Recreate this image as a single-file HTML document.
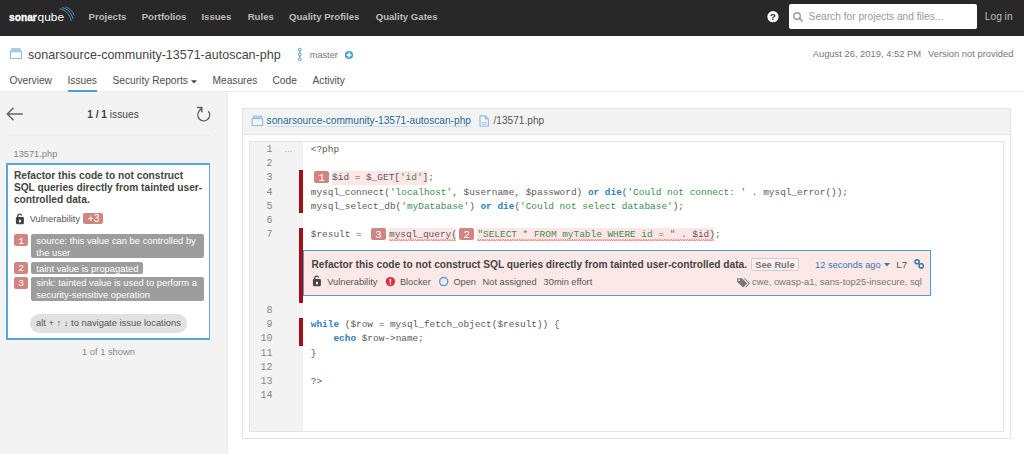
<!DOCTYPE html>
<html><head><meta charset="utf-8"><title>SonarQube</title>
<style>html,body{margin:0;padding:0;width:1024px;height:454px;overflow:hidden;background:#fff;position:relative;font-family:'Liberation Sans', sans-serif}</style>
</head><body>
<div style="position:absolute;left:0px;top:0px;width:1024px;height:35.5px;background:#282828;"></div>
<svg style="position:absolute;left:0;top:0" width="80" height="35" viewBox="0 0 80 35"><text x="9" y="20.7" font-family="Liberation Sans" font-weight="700" font-size="11.2" fill="#fff" stroke="#fff" stroke-width="0.35" textLength="27.8" lengthAdjust="spacingAndGlyphs">sonar</text><text x="37.6" y="20.7" font-family="Liberation Sans" font-weight="400" font-size="11.2" fill="#fff" textLength="26.4" lengthAdjust="spacingAndGlyphs">qube</text><g fill="none" stroke="#4b9fd5" stroke-width="0.9"><path d="M59.5 8.8 C65 9.5 70 14 71.2 21"/><path d="M62 7.5 C67.5 8.8 72 13 73 19"/><path d="M65.5 7 C70 8.5 73.5 12 74.2 15.5"/></g></svg>
<div style="position:absolute;left:88.6px;top:17.1px;font-family:'Liberation Sans', sans-serif;font-size:9.6px;line-height:0;font-weight:700;color:#bcbcbc;white-space:pre;">Projects</div>
<div style="position:absolute;left:141.7px;top:17.1px;font-family:'Liberation Sans', sans-serif;font-size:9.6px;line-height:0;font-weight:700;color:#bcbcbc;white-space:pre;">Portfolios</div>
<div style="position:absolute;left:201.4px;top:17.1px;font-family:'Liberation Sans', sans-serif;font-size:9.6px;line-height:0;font-weight:700;color:#bcbcbc;white-space:pre;">Issues</div>
<div style="position:absolute;left:247.7px;top:17.1px;font-family:'Liberation Sans', sans-serif;font-size:9.6px;line-height:0;font-weight:700;color:#bcbcbc;white-space:pre;">Rules</div>
<div style="position:absolute;left:289px;top:17.1px;font-family:'Liberation Sans', sans-serif;font-size:9.6px;line-height:0;font-weight:700;color:#bcbcbc;white-space:pre;">Quality Profiles</div>
<div style="position:absolute;left:375.7px;top:17.1px;font-family:'Liberation Sans', sans-serif;font-size:9.6px;line-height:0;font-weight:700;color:#bcbcbc;white-space:pre;">Quality Gates</div>
<svg style="position:absolute;left:766px;top:10px" width="14" height="14" viewBox="0 0 14 14"><circle cx="7" cy="6.7" r="5.6" fill="#fff"/><text x="7" y="9.9" text-anchor="middle" font-family="Liberation Sans" font-weight="700" font-size="9.6" fill="#282828">?</text></svg>
<div style="position:absolute;box-sizing:border-box;left:789px;top:4.1px;width:188px;height:24.9px;background:#fff;border-radius:2px"></div>
<svg style="position:absolute;left:792px;top:11px" width="12" height="12" viewBox="0 0 12 12"><circle cx="5.1" cy="5" r="3.2" fill="none" stroke="#999" stroke-width="1.4"/><path d="M7.5 7.4 L10 9.9" stroke="#999" stroke-width="1.6" stroke-linecap="round"/></svg>
<div style="position:absolute;left:808.6px;top:17.2px;font-family:'Liberation Sans', sans-serif;font-size:10.2px;line-height:0;font-weight:400;color:#999;white-space:pre;">Search for projects and files...</div>
<div style="position:absolute;left:984.8px;top:17.1px;font-family:'Liberation Sans', sans-serif;font-size:10.2px;line-height:0;font-weight:400;color:#bcbcbc;white-space:pre;">Log in</div>
<div style="position:absolute;left:0px;top:35.5px;width:1024px;height:55.5px;background:#fff;"></div>
<div style="position:absolute;left:0px;top:91px;width:1024px;height:1px;background:#ededed;"></div>
<svg style="position:absolute;left:9px;top:47px" width="14" height="14" viewBox="0 0 14 14"><path d="M2.4 1.1 H11.4 L12.4 3.9 H1.5 Z" fill="#a9cdea"/><rect x="1.4" y="4.6" width="11.1" height="6.9" fill="none" stroke="#8fbfe6" stroke-width="1.1"/></svg>
<div style="position:absolute;left:28.1px;top:54.6px;font-family:'Liberation Sans', sans-serif;font-size:12.52px;line-height:0;font-weight:400;color:#444;white-space:pre;">sonarsource-community-13571-autoscan-php</div>
<svg style="position:absolute;left:296px;top:47px" width="8" height="15" viewBox="0 0 8 15"><g fill="none" stroke="#4b9fd5" stroke-width="1"><circle cx="3.8" cy="2.6" r="1.4"/><circle cx="3.8" cy="7.5" r="1.4"/><circle cx="3.8" cy="12.4" r="1.4"/><path d="M3.8 4 V6.1 M3.8 8.9 V11"/></g></svg>
<div style="position:absolute;left:309.8px;top:55.2px;font-family:'Liberation Sans', sans-serif;font-size:9.16px;line-height:0;font-weight:400;color:#777;white-space:pre;">master</div>
<svg style="position:absolute;left:344px;top:50px" width="10" height="10" viewBox="0 0 10 10"><circle cx="5" cy="5" r="4.1" fill="#4b9fd5"/><path d="M5 2.5 V7.5 M2.5 5 H7.5" stroke="#fff" stroke-width="1.5"/></svg>
<div style="position:absolute;left:812.7px;top:54.1px;font-family:'Liberation Sans', sans-serif;font-size:9.38px;line-height:0;font-weight:400;color:#777;white-space:pre;">August 26, 2019, 4:52 PM</div>
<div style="position:absolute;left:928px;top:54.1px;font-family:'Liberation Sans', sans-serif;font-size:9.38px;line-height:0;font-weight:400;color:#777;white-space:pre;">Version not provided</div>
<div style="position:absolute;left:9.5px;top:81.2px;font-family:'Liberation Sans', sans-serif;font-size:10.2px;line-height:0;font-weight:400;color:#4e4e4e;white-space:pre;">Overview</div>
<div style="position:absolute;left:67.5px;top:81.2px;font-family:'Liberation Sans', sans-serif;font-size:10.2px;line-height:0;font-weight:400;color:#4e4e4e;white-space:pre;">Issues</div>
<div style="position:absolute;left:112.5px;top:81.2px;font-family:'Liberation Sans', sans-serif;font-size:10.2px;line-height:0;font-weight:400;color:#4e4e4e;white-space:pre;">Security Reports</div>
<div style="position:absolute;left:212.5px;top:81.2px;font-family:'Liberation Sans', sans-serif;font-size:10.2px;line-height:0;font-weight:400;color:#4e4e4e;white-space:pre;">Measures</div>
<div style="position:absolute;left:272.5px;top:81.2px;font-family:'Liberation Sans', sans-serif;font-size:10.2px;line-height:0;font-weight:400;color:#4e4e4e;white-space:pre;">Code</div>
<div style="position:absolute;left:312.5px;top:81.2px;font-family:'Liberation Sans', sans-serif;font-size:10.2px;line-height:0;font-weight:400;color:#4e4e4e;white-space:pre;">Activity</div>
<svg style="position:absolute;left:190px;top:78.5px" width="8" height="6" viewBox="0 0 8 6"><path d="M1 1.2 H7 L4 4.6 Z" fill="#444"/></svg>
<div style="position:absolute;left:68px;top:90px;width:29px;height:2px;background:#4b9fd5;"></div>
<div style="position:absolute;left:0px;top:91.6px;width:226.6px;height:362.4px;background:#f3f3f3;"></div>
<div style="position:absolute;left:226.6px;top:91.6px;width:1.2px;height:362.4px;background:#e9e9e9;"></div>
<svg style="position:absolute;left:5px;top:106px" width="20" height="16" viewBox="0 0 20 16"><path d="M2.5 8 H17.8 M8.5 1.8 L2.3 8 L8.5 14.2" fill="none" stroke="#666" stroke-width="1.5"/></svg>
<div style="position:absolute;left:87.2px;top:115.3px;font-family:'Liberation Sans', sans-serif;font-size:10.2px;line-height:0;color:#444;white-space:pre"><b>1 / 1</b> issues</div>
<svg style="position:absolute;left:190px;top:100px" width="28" height="28" viewBox="0 0 28 28"><path d="M18.3 11.2 A5.9 5.9 0 1 1 9 11.4 L11.6 7.8" fill="none" stroke="#666" stroke-width="1.5"/><path d="M7 7.5 H11.8 V12.2" fill="none" stroke="#666" stroke-width="1.6"/></svg>
<div style="position:absolute;left:6.7px;top:134.8px;width:203.3px;height:1.7px;background:#e9e9e9;"></div>
<div style="position:absolute;left:13.5px;top:154.1px;font-family:'Liberation Sans', sans-serif;font-size:9.27px;line-height:0;font-weight:400;color:#858585;white-space:pre;">13571.php</div>
<div style="position:absolute;box-sizing:border-box;left:6px;top:163px;width:204.4px;height:177px;background:#fff;border:2px solid #5aa6da;border-right-width:1.6px"></div>
<div style="position:absolute;left:13.9px;top:176px;font-family:'Liberation Sans', sans-serif;font-size:10.2px;line-height:0;font-weight:700;color:#444;white-space:pre;">Refactor this code to not construct</div>
<div style="position:absolute;left:13.9px;top:187.9px;font-family:'Liberation Sans', sans-serif;font-size:10.2px;line-height:0;font-weight:700;color:#444;white-space:pre;">SQL queries directly from tainted user-</div>
<div style="position:absolute;left:13.9px;top:199.9px;font-family:'Liberation Sans', sans-serif;font-size:10.2px;line-height:0;font-weight:700;color:#444;white-space:pre;">controlled data.</div>
<svg style="position:absolute;left:15px;top:212.5px" width="10" height="12" viewBox="0 0 10 12"><path d="M2.75 4.6 V3.1 A1.95 1.95 0 0 1 6.6 2.6" fill="none" stroke="#444" stroke-width="1.3"/><rect x="0.9" y="4.1" width="8" height="7.1" rx="1.1" fill="#444"/><ellipse cx="4.9" cy="8" rx="1.1" ry="1.5" fill="#fff"/></svg>
<div style="position:absolute;left:29.75px;top:218.7px;font-family:'Liberation Sans', sans-serif;font-size:9.3px;line-height:0;font-weight:400;color:#555;white-space:pre;">Vulnerability</div>
<div style="position:absolute;box-sizing:border-box;left:83.2px;top:212.7px;width:19.8px;height:11.7px;background:#d18582;border-radius:2px"></div>
<div style="position:absolute;left:87.8px;top:219.2px;font-family:'Liberation Sans', sans-serif;font-size:10.1px;line-height:0;font-weight:400;color:#fff;white-space:pre;">+3</div>
<div style="position:absolute;box-sizing:border-box;left:13.7px;top:234.4px;width:14.7px;height:11.6px;background:#d18582;border-radius:2px"></div>
<div style="position:absolute;left:13.7px;width:14.7px;text-align:center;top:241.5px;font-family:'Liberation Mono', monospace;font-size:9.6px;line-height:0;color:#fff">1</div>
<div style="position:absolute;box-sizing:border-box;left:31.4px;top:234.2px;width:172.3px;height:23.6px;background:#9d9d9d;border-radius:2px"></div>
<div style="position:absolute;left:36.35px;top:240.6px;font-family:'Liberation Sans', sans-serif;font-size:9.38px;line-height:0;font-weight:400;color:#fff;white-space:pre;">source: this value can be controlled by</div>
<div style="position:absolute;left:36.35px;top:252.6px;font-family:'Liberation Sans', sans-serif;font-size:9.38px;line-height:0;font-weight:400;color:#fff;white-space:pre;">the user</div>
<div style="position:absolute;box-sizing:border-box;left:13.7px;top:262.2px;width:14.7px;height:11.6px;background:#d18582;border-radius:2px"></div>
<div style="position:absolute;left:13.7px;width:14.7px;text-align:center;top:269.3px;font-family:'Liberation Mono', monospace;font-size:9.6px;line-height:0;color:#fff">2</div>
<div style="position:absolute;box-sizing:border-box;left:31.4px;top:262.3px;width:111.6px;height:11.7px;background:#9d9d9d;border-radius:2px"></div>
<div style="position:absolute;left:36.35px;top:268.6px;font-family:'Liberation Sans', sans-serif;font-size:9.38px;line-height:0;font-weight:400;color:#fff;white-space:pre;">taint value is propagated</div>
<div style="position:absolute;box-sizing:border-box;left:13.7px;top:277px;width:14.7px;height:11.6px;background:#d18582;border-radius:2px"></div>
<div style="position:absolute;left:13.7px;width:14.7px;text-align:center;top:284.1px;font-family:'Liberation Mono', monospace;font-size:9.6px;line-height:0;color:#fff">3</div>
<div style="position:absolute;box-sizing:border-box;left:31.4px;top:277px;width:172.3px;height:24px;background:#9d9d9d;border-radius:2px"></div>
<div style="position:absolute;left:36.35px;top:283.4px;font-family:'Liberation Sans', sans-serif;font-size:9.38px;line-height:0;font-weight:400;color:#fff;white-space:pre;">sink: tainted value is used to perform a</div>
<div style="position:absolute;left:36.35px;top:295.4px;font-family:'Liberation Sans', sans-serif;font-size:9.38px;line-height:0;font-weight:400;color:#fff;white-space:pre;">security-sensitive operation</div>
<div style="position:absolute;box-sizing:border-box;left:30px;top:314px;width:157.1px;height:18.8px;background:#e1e1e1;border-radius:9.4px"></div>
<div style="position:absolute;left:36px;top:322.7px;font-family:'Liberation Sans', sans-serif;font-size:9.37px;line-height:0;font-weight:400;color:#555;white-space:pre;">alt + ↑ ↓ to navigate issue locations</div>
<div style="position:absolute;left:82.1px;top:352px;font-family:'Liberation Sans', sans-serif;font-size:9.3px;line-height:0;font-weight:400;color:#888;white-space:pre;">1 of 1 shown</div>
<div style="position:absolute;box-sizing:border-box;left:242px;top:108px;width:769px;height:331px;border:1px solid #e3e3e3"></div>
<div style="position:absolute;left:243px;top:109px;width:767px;height:25px;background:#f3f3f3;"></div>
<div style="position:absolute;left:243px;top:134px;width:767px;height:1px;background:#e3e3e3;"></div>
<svg style="position:absolute;left:251px;top:114px" width="13" height="13" viewBox="0 0 13 13"><path d="M2 1.4 H10.8 L11.6 4 H1.2 Z" fill="#a9cdea"/><rect x="1.2" y="4.6" width="10.4" height="7" fill="none" stroke="#8fbfe6" stroke-width="1.1"/></svg>
<div style="position:absolute;left:266.6px;top:121.4px;font-family:'Liberation Sans', sans-serif;font-size:10.15px;line-height:0;font-weight:400;color:#236a97;white-space:pre;">sonarsource-community-13571-autoscan-php</div>
<div style="position:absolute;left:266.6px;top:126.2px;width:204.4px;height:0.8px;background:#c8dcea;"></div>
<svg style="position:absolute;left:478px;top:114px" width="12" height="14" viewBox="0 0 12 14"><path d="M2 1.9 H7.4 L10.4 4.9 V12.2 H2 Z M7.4 1.9 V4.9 H10.4" fill="none" stroke="#8fbfe6" stroke-width="1.1"/><path d="M3.6 8.6 H8.8 M3.6 10.3 H8.8" stroke="#9cc6e8" stroke-width="0.9"/></svg>
<div style="position:absolute;left:493.5px;top:121.4px;font-family:'Liberation Sans', sans-serif;font-size:10.15px;line-height:0;font-weight:400;color:#555;white-space:pre;">/13571.php</div>
<div style="position:absolute;box-sizing:border-box;left:249px;top:141px;width:755px;height:291px;border:1px solid #e3e3e3"></div>
<div style="position:absolute;left:250px;top:142px;width:53px;height:289px;background:#f3f3f3;"></div>
<div style="position:absolute;left:266.5px;top:150.1px;font-family:'Liberation Mono', monospace;font-size:10.0px;line-height:0;font-weight:400;color:#888;white-space:pre;">1</div>
<div style="position:absolute;left:266.5px;top:164.25px;font-family:'Liberation Mono', monospace;font-size:10.0px;line-height:0;font-weight:400;color:#888;white-space:pre;">2</div>
<div style="position:absolute;left:266.5px;top:178.4px;font-family:'Liberation Mono', monospace;font-size:10.0px;line-height:0;font-weight:400;color:#888;white-space:pre;">3</div>
<div style="position:absolute;left:266.5px;top:192.55px;font-family:'Liberation Mono', monospace;font-size:10.0px;line-height:0;font-weight:400;color:#888;white-space:pre;">4</div>
<div style="position:absolute;left:266.5px;top:206.7px;font-family:'Liberation Mono', monospace;font-size:10.0px;line-height:0;font-weight:400;color:#888;white-space:pre;">5</div>
<div style="position:absolute;left:266.5px;top:220.85px;font-family:'Liberation Mono', monospace;font-size:10.0px;line-height:0;font-weight:400;color:#888;white-space:pre;">6</div>
<div style="position:absolute;left:266.5px;top:235.0px;font-family:'Liberation Mono', monospace;font-size:10.0px;line-height:0;font-weight:400;color:#888;white-space:pre;">7</div>
<div style="position:absolute;left:266.5px;top:311px;font-family:'Liberation Mono', monospace;font-size:10.0px;line-height:0;font-weight:400;color:#888;white-space:pre;">8</div>
<div style="position:absolute;left:266.5px;top:325px;font-family:'Liberation Mono', monospace;font-size:10.0px;line-height:0;font-weight:400;color:#888;white-space:pre;">9</div>
<div style="position:absolute;left:260.5px;top:339px;font-family:'Liberation Mono', monospace;font-size:10.0px;line-height:0;font-weight:400;color:#888;white-space:pre;">10</div>
<div style="position:absolute;left:260.5px;top:354px;font-family:'Liberation Mono', monospace;font-size:10.0px;line-height:0;font-weight:400;color:#888;white-space:pre;">11</div>
<div style="position:absolute;left:260.5px;top:368px;font-family:'Liberation Mono', monospace;font-size:10.0px;line-height:0;font-weight:400;color:#888;white-space:pre;">12</div>
<div style="position:absolute;left:260.5px;top:382px;font-family:'Liberation Mono', monospace;font-size:10.0px;line-height:0;font-weight:400;color:#888;white-space:pre;">13</div>
<div style="position:absolute;left:260.5px;top:396px;font-family:'Liberation Mono', monospace;font-size:10.0px;line-height:0;font-weight:400;color:#888;white-space:pre;">14</div>
<div style="position:absolute;left:284.3px;top:150.1px;font-family:'Liberation Sans', sans-serif;font-size:8px;line-height:0;font-weight:400;color:#777;white-space:pre;">…</div>
<div style="position:absolute;left:299px;top:170.4px;width:4px;height:42.2px;background:#a2101c;"></div>
<div style="position:absolute;left:299px;top:227.7px;width:4px;height:75.2px;background:#a2101c;"></div>
<div style="position:absolute;left:299px;top:317.7px;width:4px;height:28.0px;background:#a2101c;"></div>
<div style="position:absolute;left:310.8px;top:150.1px;font-family:'Liberation Mono', monospace;font-size:9.43px;line-height:0;font-weight:400;color:#5a5a5a;white-space:pre;"><span style="color:#5a5a5a;font-weight:400">&lt;?php</span></div>
<div style="position:absolute;box-sizing:border-box;left:314.3px;top:171.2px;width:14.6px;height:12.0px;background:#d18582;border-radius:2px"></div>
<div style="position:absolute;left:314.3px;width:14.6px;text-align:center;top:178.0px;font-family:'Liberation Mono', monospace;font-size:10.6px;line-height:0;color:#fff">1</div>
<div style="position:absolute;left:331.9px;top:170.5px;width:95.7px;height:14.3px;background:#fde6e6;"></div>
<div style="position:absolute;left:332.1px;top:178.4px;font-family:'Liberation Mono', monospace;font-size:9.43px;line-height:0;font-weight:400;color:#5a5a5a;white-space:pre;"><span style="color:#5a5a5a;font-weight:400">$id = $_GET[</span><span style="color:#3d8b50;font-weight:400">'id'</span><span style="color:#5a5a5a;font-weight:400">];</span></div>
<div style="position:absolute;left:310.8px;top:192.55px;font-family:'Liberation Mono', monospace;font-size:9.43px;line-height:0;font-weight:400;color:#5a5a5a;white-space:pre;"><span style="color:#5a5a5a;font-weight:400">mysql_connect(</span><span style="color:#3d8b50;font-weight:400">'localhost'</span><span style="color:#5a5a5a;font-weight:400">, $username, $password) </span><span style="color:#2f7fc0;font-weight:700">or</span><span style="color:#5a5a5a;font-weight:400"> </span><span style="color:#2f7fc0;font-weight:700">die</span><span style="color:#5a5a5a;font-weight:400">(</span><span style="color:#3d8b50;font-weight:400">'Could not connect: '</span><span style="color:#5a5a5a;font-weight:400"> . mysql_error());</span></div>
<div style="position:absolute;left:310.8px;top:206.7px;font-family:'Liberation Mono', monospace;font-size:9.43px;line-height:0;font-weight:400;color:#5a5a5a;white-space:pre;"><span style="color:#5a5a5a;font-weight:400">mysql_select_db(</span><span style="color:#3d8b50;font-weight:400">'myDatabase'</span><span style="color:#5a5a5a;font-weight:400">) </span><span style="color:#2f7fc0;font-weight:700">or</span><span style="color:#5a5a5a;font-weight:400"> </span><span style="color:#2f7fc0;font-weight:700">die</span><span style="color:#5a5a5a;font-weight:400">(</span><span style="color:#3d8b50;font-weight:400">'Could not select database'</span><span style="color:#5a5a5a;font-weight:400">);</span></div>
<div style="position:absolute;left:310.8px;top:235.0px;font-family:'Liberation Mono', monospace;font-size:9.43px;line-height:0;font-weight:400;color:#5a5a5a;white-space:pre;"><span style="color:#5a5a5a;font-weight:400">$result = </span></div>
<div style="position:absolute;box-sizing:border-box;left:371px;top:228.2px;width:14.8px;height:12.3px;background:#d18582;border-radius:2px"></div>
<div style="position:absolute;left:371px;width:14.8px;text-align:center;top:235.3px;font-family:'Liberation Mono', monospace;font-size:10.6px;line-height:0;color:#fff">3</div>
<div style="position:absolute;left:388.8px;top:227.7px;width:67.1px;height:13.7px;background:#fde6e6;"></div>
<div style="position:absolute;left:389px;top:235.0px;font-family:'Liberation Mono', monospace;font-size:9.43px;line-height:0;font-weight:400;color:#5a5a5a;white-space:pre;"><span style="color:#5a5a5a;font-weight:400">mysql_query(</span></div>
<div style="position:absolute;box-sizing:border-box;left:459.3px;top:228.1px;width:14.6px;height:12.4px;background:#d18582;border-radius:2px"></div>
<div style="position:absolute;left:459.3px;width:14.6px;text-align:center;top:235.3px;font-family:'Liberation Mono', monospace;font-size:10.6px;line-height:0;color:#fff">2</div>
<div style="position:absolute;left:477.2px;top:227.7px;width:237.2px;height:13.7px;background:#fde6e6;"></div>
<div style="position:absolute;left:477.4px;top:235.0px;font-family:'Liberation Mono', monospace;font-size:9.43px;line-height:0;font-weight:400;color:#5a5a5a;white-space:pre;"><span style="color:#3d8b50;font-weight:400">"SELECT * FROM myTable WHERE id = "</span><span style="color:#5a5a5a;font-weight:400"> . $id</span><span style="color:#5a5a5a;font-weight:400">);</span></div>
<svg style="position:absolute;left:388.8px;top:238.9px" width="67.1" height="2.5" viewBox="0 0 67.1 2.5"><polyline points="0.0,1.7 1.15,0.5 2.3,1.7 3.45,0.5 4.6,1.7 5.75,0.5 6.9,1.7 8.05,0.5 9.2,1.7 10.35,0.5 11.5,1.7 12.65,0.5 13.8,1.7 14.95,0.5 16.1,1.7 17.25,0.5 18.4,1.7 19.55,0.5 20.7,1.7 21.85,0.5 23.0,1.7 24.15,0.5 25.3,1.7 26.45,0.5 27.6,1.7 28.75,0.5 29.9,1.7 31.05,0.5 32.2,1.7 33.35,0.5 34.5,1.7 35.65,0.5 36.8,1.7 37.95,0.5 39.1,1.7 40.25,0.5 41.4,1.7 42.55,0.5 43.7,1.7 44.85,0.5 46.0,1.7 47.15,0.5 48.3,1.7 49.45,0.5 50.6,1.7 51.75,0.5 52.9,1.7 54.05,0.5 55.2,1.7 56.35,0.5 57.5,1.7 58.65,0.5 59.8,1.7 60.95,0.5 62.1,1.7 63.25,0.5 64.4,1.7 65.55,0.5 66.7,1.7" fill="none" stroke="#ec5c68" stroke-width="0.9"/></svg>
<svg style="position:absolute;left:477.2px;top:238.9px" width="237.2" height="2.5" viewBox="0 0 237.2 2.5"><polyline points="0.0,1.7 1.15,0.5 2.3,1.7 3.45,0.5 4.6,1.7 5.75,0.5 6.9,1.7 8.05,0.5 9.2,1.7 10.35,0.5 11.5,1.7 12.65,0.5 13.8,1.7 14.95,0.5 16.1,1.7 17.25,0.5 18.4,1.7 19.55,0.5 20.7,1.7 21.85,0.5 23.0,1.7 24.15,0.5 25.3,1.7 26.45,0.5 27.6,1.7 28.75,0.5 29.9,1.7 31.05,0.5 32.2,1.7 33.35,0.5 34.5,1.7 35.65,0.5 36.8,1.7 37.95,0.5 39.1,1.7 40.25,0.5 41.4,1.7 42.55,0.5 43.7,1.7 44.85,0.5 46.0,1.7 47.15,0.5 48.3,1.7 49.45,0.5 50.6,1.7 51.75,0.5 52.9,1.7 54.05,0.5 55.2,1.7 56.35,0.5 57.5,1.7 58.65,0.5 59.8,1.7 60.95,0.5 62.1,1.7 63.25,0.5 64.4,1.7 65.55,0.5 66.7,1.7 67.85,0.5 69.0,1.7 70.15,0.5 71.3,1.7 72.45,0.5 73.6,1.7 74.75,0.5 75.9,1.7 77.05,0.5 78.2,1.7 79.35,0.5 80.5,1.7 81.65,0.5 82.8,1.7 83.95,0.5 85.1,1.7 86.25,0.5 87.4,1.7 88.55,0.5 89.7,1.7 90.85,0.5 92.0,1.7 93.15,0.5 94.3,1.7 95.45,0.5 96.6,1.7 97.75,0.5 98.9,1.7 100.05,0.5 101.2,1.7 102.35,0.5 103.5,1.7 104.65,0.5 105.8,1.7 106.95,0.5 108.1,1.7 109.25,0.5 110.4,1.7 111.55,0.5 112.7,1.7 113.85,0.5 115.0,1.7 116.15,0.5 117.3,1.7 118.45,0.5 119.6,1.7 120.75,0.5 121.9,1.7 123.05,0.5 124.2,1.7 125.35,0.5 126.5,1.7 127.65,0.5 128.8,1.7 129.95,0.5 131.1,1.7 132.25,0.5 133.4,1.7 134.55,0.5 135.7,1.7 136.85,0.5 138.0,1.7 139.15,0.5 140.3,1.7 141.45,0.5 142.6,1.7 143.75,0.5 144.9,1.7 146.05,0.5 147.2,1.7 148.35,0.5 149.5,1.7 150.65,0.5 151.8,1.7 152.95,0.5 154.1,1.7 155.25,0.5 156.4,1.7 157.55,0.5 158.7,1.7 159.85,0.5 161.0,1.7 162.15,0.5 163.3,1.7 164.45,0.5 165.6,1.7 166.75,0.5 167.9,1.7 169.05,0.5 170.2,1.7 171.35,0.5 172.5,1.7 173.65,0.5 174.8,1.7 175.95,0.5 177.1,1.7 178.25,0.5 179.4,1.7 180.55,0.5 181.7,1.7 182.85,0.5 184.0,1.7 185.15,0.5 186.3,1.7 187.45,0.5 188.6,1.7 189.75,0.5 190.9,1.7 192.05,0.5 193.2,1.7 194.35,0.5 195.5,1.7 196.65,0.5 197.8,1.7 198.95,0.5 200.1,1.7 201.25,0.5 202.4,1.7 203.55,0.5 204.7,1.7 205.85,0.5 207.0,1.7 208.15,0.5 209.3,1.7 210.45,0.5 211.6,1.7 212.75,0.5 213.9,1.7 215.05,0.5 216.2,1.7 217.35,0.5 218.5,1.7 219.65,0.5 220.8,1.7 221.95,0.5 223.1,1.7 224.25,0.5 225.4,1.7 226.55,0.5 227.7,1.7 228.85,0.5 230.0,1.7 231.15,0.5 232.3,1.7 233.45,0.5 234.6,1.7 235.75,0.5 236.9,1.7" fill="none" stroke="#ec5c68" stroke-width="0.9"/></svg>
<div style="position:absolute;left:310.8px;top:325px;font-family:'Liberation Mono', monospace;font-size:9.43px;line-height:0;font-weight:400;color:#5a5a5a;white-space:pre;"><span style="color:#2f7fc0;font-weight:700">while</span><span style="color:#5a5a5a;font-weight:400"> ($row = mysql_fetch_object($result)) {</span></div>
<div style="position:absolute;left:310.8px;top:339px;font-family:'Liberation Mono', monospace;font-size:9.43px;line-height:0;font-weight:400;color:#5a5a5a;white-space:pre;"><span style="color:#5a5a5a;font-weight:400">    </span><span style="color:#2f7fc0;font-weight:700">echo</span><span style="color:#5a5a5a;font-weight:400"> $row-&gt;name;</span></div>
<div style="position:absolute;left:310.8px;top:354px;font-family:'Liberation Mono', monospace;font-size:9.43px;line-height:0;font-weight:400;color:#5a5a5a;white-space:pre;"><span style="color:#5a5a5a;font-weight:400">}</span></div>
<div style="position:absolute;left:310.8px;top:382px;font-family:'Liberation Mono', monospace;font-size:9.43px;line-height:0;font-weight:400;color:#5a5a5a;white-space:pre;"><span style="color:#5a5a5a;font-weight:400">?&gt;</span></div>
<div style="position:absolute;box-sizing:border-box;left:303px;top:249.6px;width:627.6px;height:46.4px;background:#fde8e8;border:1.6px solid #4b9fd5"></div>
<div style="position:absolute;left:311.5px;top:264.7px;font-family:'Liberation Sans', sans-serif;font-size:10.18px;line-height:0;font-weight:700;color:#444;white-space:pre;">Refactor this code to not construct SQL queries directly from tainted user-controlled data.</div>
<div style="position:absolute;box-sizing:border-box;left:751px;top:257.5px;width:48px;height:13.2px;border:1px solid #cfcfcf;border-radius:2px;background:#fdf0f0"></div>
<div style="position:absolute;left:755.2px;top:264.6px;font-family:'Liberation Sans', sans-serif;font-size:9.33px;line-height:0;font-weight:700;color:#777;white-space:pre;">See Rule</div>
<div style="position:absolute;left:815.1px;top:265.3px;font-family:'Liberation Sans', sans-serif;font-size:9.29px;line-height:0;font-weight:400;color:#3478ae;white-space:pre;">12 seconds ago</div>
<svg style="position:absolute;left:883px;top:262px" width="8" height="6" viewBox="0 0 8 6"><path d="M1 1 H7 L4 4.4 Z" fill="#3478ae"/></svg>
<div style="position:absolute;left:896.3px;top:265px;font-family:'Liberation Sans', sans-serif;font-size:9.9px;line-height:0;font-weight:400;color:#555;white-space:pre;">L7</div>
<svg style="position:absolute;left:908px;top:254px" width="22" height="20" viewBox="0 0 22 20"><g fill="none" stroke="#2f73a8" stroke-width="1.4"><circle cx="9.1" cy="7.8" r="2.1"/><circle cx="13.2" cy="11.9" r="2.1"/></g></svg>
<svg style="position:absolute;left:311.7px;top:274.7px" width="10" height="12" viewBox="0 0 10 12"><path d="M2.75 4.6 V3.1 A1.95 1.95 0 0 1 6.6 2.6" fill="none" stroke="#444" stroke-width="1.3"/><rect x="0.9" y="4.1" width="8" height="7.1" rx="1.1" fill="#444"/><ellipse cx="4.9" cy="8" rx="1.1" ry="1.5" fill="#fff"/></svg>
<div style="position:absolute;left:327.2px;top:281.8px;font-family:'Liberation Sans', sans-serif;font-size:9.3px;line-height:0;font-weight:400;color:#555;white-space:pre;">Vulnerability</div>
<svg style="position:absolute;left:385px;top:276px" width="11" height="11" viewBox="0 0 11 11"><circle cx="5.4" cy="5.6" r="4.7" fill="#d4333f"/><path d="M5.4 2.8 V6.4" stroke="#fff" stroke-width="1.4"/><circle cx="5.4" cy="8.1" r="0.8" fill="#fff"/></svg>
<div style="position:absolute;left:399.9px;top:281.8px;font-family:'Liberation Sans', sans-serif;font-size:9.25px;line-height:0;font-weight:400;color:#555;white-space:pre;">Blocker</div>
<svg style="position:absolute;left:438px;top:276px" width="11" height="11" viewBox="0 0 11 11"><circle cx="5.7" cy="5.6" r="4.1" fill="none" stroke="#4b9fd5" stroke-width="1.3"/></svg>
<div style="position:absolute;left:453.4px;top:281.8px;font-family:'Liberation Sans', sans-serif;font-size:9.25px;line-height:0;font-weight:400;color:#555;white-space:pre;">Open</div>
<div style="position:absolute;left:482.6px;top:281.8px;font-family:'Liberation Sans', sans-serif;font-size:9.25px;line-height:0;font-weight:400;color:#555;white-space:pre;">Not assigned</div>
<div style="position:absolute;left:543.6px;top:281.8px;font-family:'Liberation Sans', sans-serif;font-size:9.25px;line-height:0;font-weight:400;color:#555;white-space:pre;">30min effort</div>
<svg style="position:absolute;left:735.6px;top:277px" width="15" height="12" viewBox="0 0 15 12"><path d="M1.2 1.2 H6 L11.2 6.4 L7 10.6 L1.2 4.8 Z" fill="#777"/><path d="M7.6 1.2 H8.8 L14 6.4 L9.8 10.6 L9.2 10 L12.8 6.4 Z" fill="#777"/><circle cx="3.2" cy="3.2" r="0.9" fill="#fde8e8"/></svg>
<div style="position:absolute;left:752px;top:282.4px;font-family:'Liberation Sans', sans-serif;font-size:9.4px;line-height:0;font-weight:400;color:#777;white-space:pre;">cwe, owasp-a1, sans-top25-insecure, sql</div>
</body></html>
